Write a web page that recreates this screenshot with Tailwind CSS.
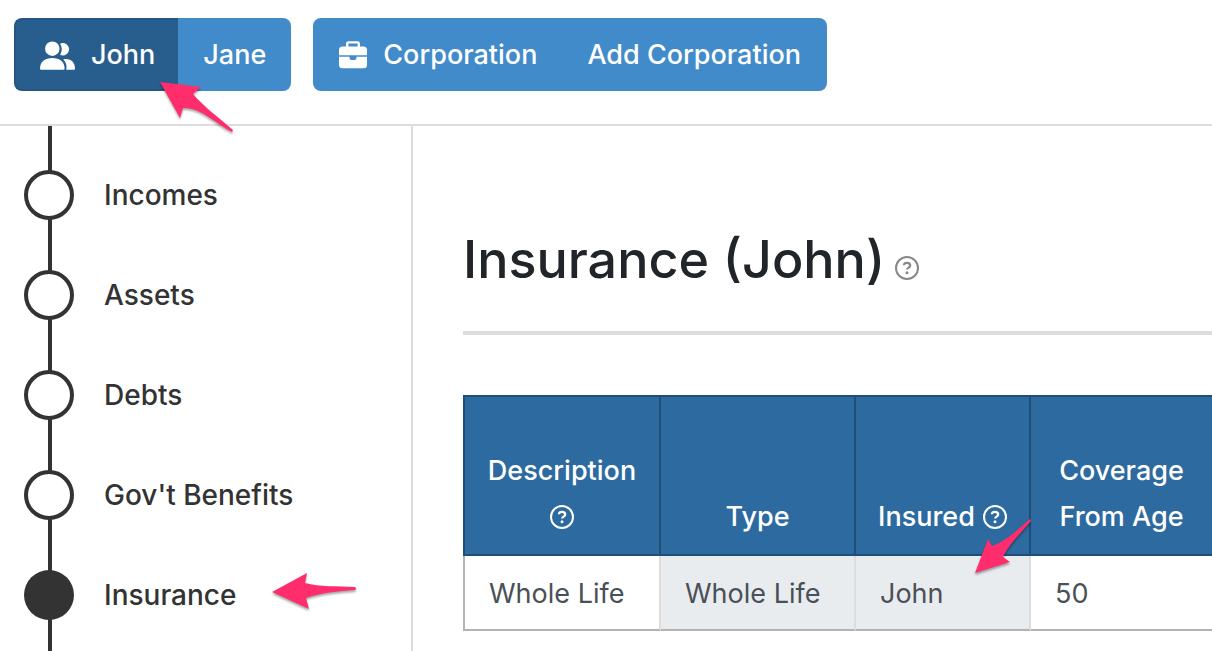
<!DOCTYPE html>
<html lang="en">
  <head>
    <meta charset="UTF-8" />
    <meta name="viewport" content="width=device-width, initial-scale=1.0" />
    <title>Insurance (John)</title>
    <script src="https://cdn.jsdelivr.net/npm/@tailwindcss/browser@4"></script>
  </head>
  <body
    class="flex flex-col min-h-screen overflow-x-hidden bg-white font-['Inter','Liberation_Sans',sans-serif] text-[27px] leading-[46px] text-[#333]"
  >
    <!-- Shared help icon -->
    <svg class="hidden">
      <symbol id="help" viewBox="0 0 24 24">
        <circle cx="12" cy="12" r="11" fill="none" stroke="currentColor" stroke-width="2" />
        <path
          d="M8.900 9.200C9 7.500 10.300 6.800 12 6.800c1.900 0 3.200 1 3.200 2.600 0 2.200-3.100 2.200-3.100 4.200"
          fill="none"
          stroke="currentColor"
          stroke-width="2.200"
        />
        <circle cx="12" cy="16.700" r="1.500" fill="currentColor" />
      </symbol>
    </svg>

    <header class="flex gap-[22px] h-[126px] pt-[18px] pl-[14px] border-b-2 border-[#ddd]">
      <div class="flex h-[73px]">
        <button
          class="relative flex items-center gap-4 pl-6 pr-[23px] pt-px rounded-l-lg border-y-2 border-l-2 border-[#255681] bg-[#285e8e] text-white font-medium"
        >
          <svg class="w-[35px] h-[29px]" viewBox="0 0 35 29" fill="currentColor">
            <circle cx="12.300" cy="7.700" r="7.200" />
            <path d="M0 27.500C0 21 5 17 12.300 17s12.300 4 12.300 10.500c0 .900-.600 1.300-1.400 1.300H1.400C.6 28.800 0 28.400 0 27.500z" />
            <path d="M20 2.800a6.200 6.200 0 1 1 0 11c2.300-3.400 2.300-7.600 0-11z" />
            <path d="M23.200 18.600c6.300-2 11.800 2.300 11.800 8.700 0 1-.500 1.500-1.500 1.500h-7.300c1-3.800-.3-7.700-3-10.200z" />
          </svg>
          John
          <svg
            class="absolute left-36 top-[62px] z-10 w-[76px] h-[54px] drop-shadow-[0_2px_1px_rgb(0_0_0/0.35)]"
            viewBox="0 0 76 54"
            fill="#ff2d6b"
          >
            <path d="M0 0l41 5-8 7C43 24 58 35 73 48l-1 2C55 41 40 25 23 26l-3 10z" />
          </svg>
        </button>
        <button class="px-[25px] pt-px rounded-r-lg bg-[#428bca] text-white font-medium">Jane</button>
      </div>
      <div class="flex h-[73px] rounded-lg bg-[#428bca] text-white font-medium">
        <button class="flex items-center gap-4 pl-[26px] pr-6 pt-px">
          <svg class="w-7 h-[29px]" viewBox="0 0 28 29" fill="currentColor">
            <path
              d="M7 5.500V3a2.700 2.700 0 0 1 2.700-2.700h8.600A2.700 2.700 0 0 1 21 3v2.500h3.500A3.500 3.500 0 0 1 28 9v5.300H0V9a3.500 3.500 0 0 1 3.500-3.500zm2.400 0h9.200V2.600H9.400z"
              fill-rule="evenodd"
            />
            <path d="M0 15.700h10.500v1.300a2 2 0 0 0 2 2h3a2 2 0 0 0 2-2v-1.300H28v8a3.500 3.500 0 0 1-3.500 3.500h-21A3.500 3.500 0 0 1 0 23.700z" />
          </svg>
          Corporation
        </button>
        <button class="px-[26px] pt-px">Add Corporation</button>
      </div>
    </header>

    <div class="flex flex-1">
      <nav class="w-[413px] shrink-0 border-r-2 border-[#ddd] text-[28px] font-medium">
        <ul class="relative h-full pt-[19px] pl-6">
          <li class="absolute left-12 inset-y-0 w-1 bg-[#333]" aria-hidden="true"></li>
          <li>
            <a href="#incomes" class="relative flex items-center gap-[30px] h-[100px]">
              <span class="size-[50px] rounded-full border-4 border-[#333] bg-white"></span>
              Incomes
            </a>
          </li>
          <li>
            <a href="#assets" class="relative flex items-center gap-[30px] h-[100px]">
              <span class="size-[50px] rounded-full border-4 border-[#333] bg-white"></span>
              Assets
            </a>
          </li>
          <li>
            <a href="#debts" class="relative flex items-center gap-[30px] h-[100px]">
              <span class="size-[50px] rounded-full border-4 border-[#333] bg-white"></span>
              Debts
            </a>
          </li>
          <li>
            <a href="#benefits" class="relative flex items-center gap-[30px] h-[100px]">
              <span class="size-[50px] rounded-full border-4 border-[#333] bg-white"></span>
              Gov't Benefits
            </a>
          </li>
          <li>
            <a href="#insurance" class="relative flex items-center gap-[30px] h-[100px]">
              <span class="size-[50px] rounded-full bg-[#333]"></span>
              Insurance
              <svg
                class="absolute left-[248px] top-7 w-[86px] h-[38px] drop-shadow-[0_2px_1px_rgb(0_0_0/0.35)]"
                viewBox="0 0 86 38"
                fill="#ff2d6b"
              >
                <path d="M0 19L35 0l-2 10c15 4 32 3 50 4q2 2 0 3c-17 1-34 3-49 8l3 11z" />
              </svg>
            </a>
          </li>
        </ul>
      </nav>

      <main class="flex-1 min-w-0 pt-[98px] pl-[50px]">
        <div class="flex items-center gap-2.5 pb-[35px] border-b-4 border-[#ddd]">
          <h1 class="text-[52px] leading-[72px] font-medium text-[#212529]">Insurance (John)</h1>
          <button class="mt-4 text-[#888]" aria-label="Help">
            <svg class="size-6"><use href="#help" /></svg>
          </button>
        </div>

        <table class="w-full mt-[60px] table-fixed border-separate border-spacing-0">
          <thead>
            <tr class="h-[161px] bg-[#2d6a9f] text-white align-bottom">
              <th class="w-[198px] px-5 pb-[14px] border-2 border-[#1f4e79] font-medium">
                Description
                <svg class="size-6 mx-auto my-[11px]"><use href="#help" /></svg>
              </th>
              <th class="w-[195px] px-5 pb-[14px] border-y-2 border-r-2 border-[#1f4e79] font-medium">Type</th>
              <th class="w-[175px] pb-[14px] border-y-2 border-r-2 border-[#1f4e79] font-medium">
                <span class="flex items-center justify-center gap-2">
                  Insured
                  <svg class="size-6"><use href="#help" /></svg>
                </span>
              </th>
              <th class="px-5 pb-[14px] border-y-2 border-[#1f4e79] font-medium">Coverage From Age</th>
            </tr>
          </thead>
          <tbody>
            <tr class="h-[75px] text-[#495057]">
              <td class="pl-6 pt-0.5 border-l-2 border-b-2 border-r-2 border-[#b3b3b3] border-r-[#ddd]">Whole Life</td>
              <td class="pl-6 pt-0.5 border-b-2 border-r-2 border-b-[#b3b3b3] border-r-[#ddd] bg-[#e9ecef]">Whole Life</td>
              <td class="relative pl-6 pt-0.5 border-b-2 border-r-2 border-b-[#b3b3b3] border-r-[#ddd] bg-[#e9ecef]">
                John
                <svg
                  class="absolute left-[119px] -top-[37px] w-14 h-[54px] drop-shadow-[0_2px_1px_rgb(0_0_0/0.35)]"
                  viewBox="0 0 56 54"
                  fill="#ff2d6b"
                >
                  <path d="M0 54l13-34 4 7C31 22 42 11 55 0l1 2C46 14 34 25 28 38l7 5z" />
                </svg>
              </td>
              <td class="pl-6 pt-0.5 border-b-2 border-[#b3b3b3]">50</td>
            </tr>
          </tbody>
        </table>
      </main>
    </div>
  </body>
</html>
